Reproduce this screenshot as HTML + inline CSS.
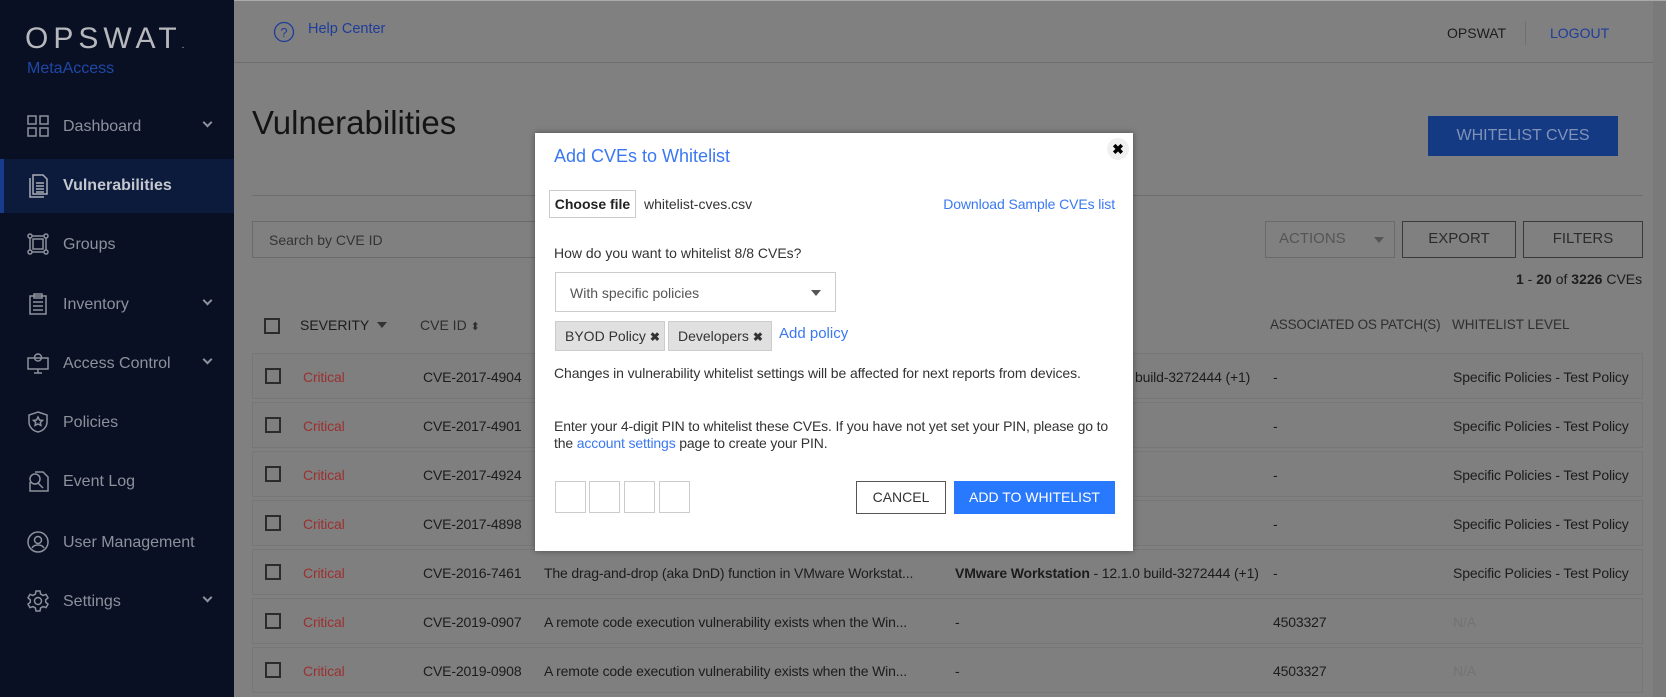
<!DOCTYPE html>
<html><head><meta charset="utf-8"><style>
*{box-sizing:border-box;margin:0;padding:0}
body{width:1666px;height:697px;overflow:hidden;background:#808080;font-family:"Liberation Sans",Arial,sans-serif;position:relative;color:#1c1c1c}
.a{position:absolute;white-space:nowrap}
#sb{position:absolute;left:0;top:0;width:234px;height:697px;background:#0a1024}
.mi{position:absolute;left:0;width:234px;height:54px;color:#8d919b;font-size:16px}
.mi span{position:absolute;left:63px;top:18px}
.mi svg{position:absolute;left:27px;top:15px}
.mi .ch{position:absolute;left:204px;top:19px;width:7px;height:7px;border-right:2px solid #8d919b;border-bottom:2px solid #8d919b;transform:rotate(45deg)}
.row{position:absolute;left:252px;width:1391px;height:46px;background:#7f7f7f;border:1px solid #777;font-size:14px;letter-spacing:-0.15px}
.row .c{position:absolute;top:15px;white-space:nowrap}
.cb{position:absolute;left:12px;top:14px;width:16px;height:16px;border:2px solid #2b2b2b}
.btn{position:absolute;border:1px solid #3a3a3a;font-size:15px;text-align:center;line-height:34px;color:#2b2b2b}
#modal{position:absolute;left:535px;top:133px;width:598px;height:418px;background:#fff;box-shadow:0 0 6px rgba(0,0,0,.4);color:#333;font-size:14px}
.bl{color:#3a78f2}
.chip{position:absolute;top:188px;height:30px;background:#e0e0e0;border:1px solid #ccc;font-size:14px;line-height:28px;padding-left:9px;color:#333;white-space:nowrap}
.pin{position:absolute;top:348px;width:31px;height:32px;border:1px solid #ccc}
.x{font-size:12px;font-weight:bold;margin-left:4px}
</style></head><body>
<div class="a" style="left:0;top:0;width:1666px;height:1px;background:#aaa"></div>
<div id="sb">
 <div class="a" style="left:25px;top:22px;font-size:30px;letter-spacing:5px;color:#b6b8bd;font-weight:300">OPSWAT<span style="font-size:10px;letter-spacing:0">.</span></div>
 <div class="a" style="left:27px;top:60px;font-size:16px;color:#1f48a8">MetaAccess</div>
 <div class="mi" style="top:100px"><svg width="22" height="22" viewBox="0 0 22 22" fill="none" stroke="#8d919b" stroke-width="1.5"><rect x="1" y="1" width="8" height="8"/><rect x="13" y="1" width="8" height="8"/><rect x="1" y="13" width="8" height="8"/><rect x="13" y="13" width="8" height="8"/></svg><span>Dashboard</span><i class="ch"></i></div>
 <div class="mi" style="top:159px;background:#0c1b3c;color:#c4c7ce;border-left:4px solid #1a3a8c"><svg width="22" height="24" viewBox="0 0 22 24" fill="none" stroke="#a9adb6" stroke-width="1.5" style="left:23px"><path d="M3 4v19h14M6 1h10l4 4v15H6z M9 9h8M9 12h8M9 15h8M9 18h8"/></svg><span style="left:59px;font-weight:bold">Vulnerabilities</span></div>
 <div class="mi" style="top:218px"><svg width="22" height="22" viewBox="0 0 22 22" fill="none" stroke="#8d919b" stroke-width="1.5"><circle cx="3" cy="3" r="2"/><circle cx="19" cy="3" r="2"/><circle cx="3" cy="19" r="2"/><circle cx="19" cy="19" r="2"/><rect x="6" y="6" width="10" height="10"/><path d="M5 3h12M5 19h12M3 5v12M19 5v12"/></svg><span>Groups</span></div>
 <div class="mi" style="top:278px"><svg width="22" height="22" viewBox="0 0 22 22" fill="none" stroke="#8d919b" stroke-width="1.5"><rect x="3" y="3" width="16" height="18"/><rect x="7" y="1" width="8" height="4"/><path d="M6 9h10M6 13h10M6 17h10"/></svg><span>Inventory</span><i class="ch"></i></div>
 <div class="mi" style="top:337px"><svg width="22" height="22" viewBox="0 0 22 22" fill="none" stroke="#8d919b" stroke-width="1.5"><rect x="1" y="6" width="20" height="11"/><path d="M7 21h8M11 17v4M11 2a3 3 0 0 1 0 7 3 3 0 0 1 0-7z"/></svg><span>Access Control</span><i class="ch"></i></div>
 <div class="mi" style="top:396px"><svg width="22" height="22" viewBox="0 0 22 22" fill="none" stroke="#8d919b" stroke-width="1.5"><path d="M11 1l9 3v7c0 5-4 9-9 10C6 20 2 16 2 11V4z"/><path d="M11 6l1.5 3 3 .4-2.2 2 .6 3L11 13l-2.9 1.4.6-3-2.2-2 3-.4z"/></svg><span>Policies</span></div>
 <div class="mi" style="top:455px"><svg width="22" height="22" viewBox="0 0 22 22" fill="none" stroke="#8d919b" stroke-width="1.5"><path d="M3 12v9h18V7l-5-5H8"/><circle cx="8" cy="9" r="5"/><path d="M11 13l5 5"/></svg><span>Event Log</span></div>
 <div class="mi" style="top:516px"><svg width="22" height="22" viewBox="0 0 22 22" fill="none" stroke="#8d919b" stroke-width="1.5"><circle cx="11" cy="11" r="10"/><circle cx="11" cy="9" r="3.5"/><path d="M5 17c2-4 10-4 12 0"/></svg><span>User Management</span></div>
 <div class="mi" style="top:575px"><svg width="22" height="22" viewBox="0 0 22 22" fill="none" stroke="#8d919b" stroke-width="1.5"><path d="M9 1h4l.6 3 2.4 1.4 3-1 2 3.4-2.3 2v2.4l2.3 2-2 3.4-3-1L13.6 18 13 21H9l-.6-3L6 16.6l-3 1-2-3.4 2.3-2V9.8L1 7.8l2-3.4 3 1L8.4 4z"/><circle cx="11" cy="11" r="3.5"/></svg><span>Settings</span><i class="ch"></i></div>
</div>
<div class="a" style="left:1653px;top:1px;width:13px;height:696px;background:#7a7a7a"></div>
<div class="a" style="left:234px;top:62px;width:1419px;height:1px;background:#6e6e6e"></div>
<svg class="a" style="left:273px;top:21px" width="22" height="22"><circle cx="11" cy="11" r="9.5" fill="none" stroke="#1f3c9a" stroke-width="1.3"/><text x="11" y="16" font-size="13" text-anchor="middle" fill="#1f3c9a" font-family="Liberation Sans">?</text></svg>
<div class="a" style="left:308px;top:21px;font-size:14.5px;color:#1f3c9a">Help Center</div>
<div class="a" style="left:1447px;top:25px;font-size:14px;color:#1c1c1c">OPSWAT</div>
<div class="a" style="left:1525px;top:21px;width:1px;height:24px;background:#707070"></div>
<div class="a" style="left:1550px;top:25px;font-size:14px;color:#1f3c9a">LOGOUT</div>
<div class="a" style="left:252px;top:104px;font-size:33px;color:#141414">Vulnerabilities</div>
<div class="a" style="left:1428px;top:116px;width:190px;height:40px;background:#143a84;color:#8192b8;font-size:16px;text-align:center;line-height:40px">WHITELIST CVES</div>
<div class="a" style="left:252px;top:195px;width:1391px;height:1px;background:#6e6e6e"></div>
<div class="a" style="left:252px;top:221px;width:300px;height:37px;border:1px solid #6a6a6a;font-size:14px;color:#333;padding:10px 0 0 16px">Search by CVE ID</div>
<div class="btn" style="left:1265px;top:221px;width:130px;height:37px;border-color:#6a6a6a;color:#555;text-align:left;padding-left:13px">ACTIONS<span style="position:absolute;right:10px;top:15px;border:5px solid transparent;border-top:6px solid #555"></span></div>
<div class="btn" style="left:1402px;top:221px;width:114px;height:37px">EXPORT</div>
<div class="btn" style="left:1523px;top:221px;width:120px;height:37px">FILTERS</div>
<div class="a" style="left:1516px;top:271px;font-size:14px;color:#1c1c1c"><b>1</b> - <b>20</b> of <b>3226</b> CVEs</div>
<div class="cb" style="left:264px;top:318px"></div>
<div class="a" style="left:300px;top:317px;font-size:14px;color:#1c1c1c">SEVERITY <span style="display:inline-block;border:5px solid transparent;border-top:6px solid #333;vertical-align:-3px;margin-left:4px"></span></div>
<div class="a" style="left:420px;top:317px;font-size:14px;color:#2e2e2e">CVE ID <span style="font-size:11px">&#x2B0D;</span></div>
<div class="a" style="left:1270px;top:317px;font-size:13.5px;letter-spacing:-0.2px;color:#2e2e2e">ASSOCIATED OS PATCH(S)</div>
<div class="a" style="left:1452px;top:317px;font-size:13.5px;color:#2e2e2e">WHITELIST LEVEL</div>

<div class="row" style="top:353px"><div class="cb"></div><div class="c" style="left:50px;color:#9c3030">Critical</div><div class="c" style="left:170px">CVE-2017-4904</div><div class="c" style="left:702px">VMware Workstation - 12.1.0 build-3272444 (+1)</div><div class="c" style="left:1020px">-</div><div class="c" style="left:1200px">Specific Policies - Test Policy</div></div>
<div class="row" style="top:402px"><div class="cb"></div><div class="c" style="left:50px;color:#9c3030">Critical</div><div class="c" style="left:170px">CVE-2017-4901</div><div class="c" style="left:702px">build-3272444</div><div class="c" style="left:1020px">-</div><div class="c" style="left:1200px">Specific Policies - Test Policy</div></div>
<div class="row" style="top:451px"><div class="cb"></div><div class="c" style="left:50px;color:#9c3030">Critical</div><div class="c" style="left:170px">CVE-2017-4924</div><div class="c" style="left:702px">build-3272444</div><div class="c" style="left:1020px">-</div><div class="c" style="left:1200px">Specific Policies - Test Policy</div></div>
<div class="row" style="top:500px"><div class="cb"></div><div class="c" style="left:50px;color:#9c3030">Critical</div><div class="c" style="left:170px">CVE-2017-4898</div><div class="c" style="left:702px">build-3272444 (+1)</div><div class="c" style="left:1020px">-</div><div class="c" style="left:1200px">Specific Policies - Test Policy</div></div>
<div class="row" style="top:549px"><div class="cb"></div><div class="c" style="left:50px;color:#9c3030">Critical</div><div class="c" style="left:170px">CVE-2016-7461</div><div class="c" style="left:291px">The drag-and-drop (aka DnD) function in VMware Workstat...</div><div class="c" style="left:702px"><b>VMware Workstation</b> - 12.1.0 build-3272444 (+1)</div><div class="c" style="left:1020px">-</div><div class="c" style="left:1200px">Specific Policies - Test Policy</div></div>
<div class="row" style="top:598px"><div class="cb"></div><div class="c" style="left:50px;color:#9c3030">Critical</div><div class="c" style="left:170px">CVE-2019-0907</div><div class="c" style="left:291px">A remote code execution vulnerability exists when the Win...</div><div class="c" style="left:702px">-</div><div class="c" style="left:1020px">4503327</div><div class="c" style="left:1200px;color:#737373">N/A</div></div>
<div class="row" style="top:647px"><div class="cb"></div><div class="c" style="left:50px;color:#9c3030">Critical</div><div class="c" style="left:170px">CVE-2019-0908</div><div class="c" style="left:291px">A remote code execution vulnerability exists when the Win...</div><div class="c" style="left:702px">-</div><div class="c" style="left:1020px">4503327</div><div class="c" style="left:1200px;color:#737373">N/A</div></div>

<div id="modal">
 <div class="a" style="left:572px;top:5px;width:22px;height:22px;border-radius:50%;background:#f0f0f0;font-size:14px;font-weight:bold;text-align:center;line-height:22px;color:#000">&#x2716;</div>
 <div class="a bl" style="left:19px;top:13px;font-size:18px">Add CVEs to Whitelist</div>
 <div class="a" style="left:14px;top:57px;width:87px;height:28px;border:1px solid #ccc;font-size:14px;font-weight:bold;text-align:center;line-height:26px;color:#222">Choose file</div>
 <div class="a" style="left:109px;top:63px;font-size:14px">whitelist-cves.csv</div>
 <div class="a bl" style="right:18px;top:63px;font-size:14px;letter-spacing:-0.1px">Download Sample CVEs list</div>
 <div class="a" style="left:19px;top:112px;font-size:14px">How do you want to whitelist 8/8 CVEs?</div>
 <div class="a" style="left:20px;top:139px;width:281px;height:40px;border:1px solid #ccc;font-size:14px;color:#555;padding:12px 0 0 14px">With specific policies<span style="position:absolute;right:14px;top:17px;border:5px solid transparent;border-top:6px solid #555"></span></div>
 <div class="chip" style="left:20px;width:110px">BYOD Policy<span class="x">&#x2716;</span></div>
 <div class="chip" style="left:133px;width:104px">Developers<span class="x">&#x2716;</span></div>
 <div class="a bl" style="left:244px;top:192px;font-size:15px">Add policy</div>
 <div class="a" style="left:19px;top:232px;font-size:14px;letter-spacing:-0.1px">Changes in vulnerability whitelist settings will be affected for next reports from devices.</div>
 <div class="a" style="left:19px;top:285px;font-size:14px;letter-spacing:-0.15px;line-height:17px">Enter your 4-digit PIN to whitelist these CVEs. If you have not yet set your PIN, please go to<br>the <span class="bl">account settings</span> page to create your PIN.</div>
 <div class="pin" style="left:20px"></div><div class="pin" style="left:54px"></div><div class="pin" style="left:89px"></div><div class="pin" style="left:124px"></div>
 <div class="a" style="left:321px;top:348px;width:90px;height:33px;border:1px solid #555;font-size:14px;text-align:center;line-height:31px;color:#333">CANCEL</div>
 <div class="a" style="left:419px;top:348px;width:161px;height:33px;background:#2979ff;color:#fff;font-size:14px;text-align:center;line-height:33px">ADD TO WHITELIST</div>
</div>
</body></html>
